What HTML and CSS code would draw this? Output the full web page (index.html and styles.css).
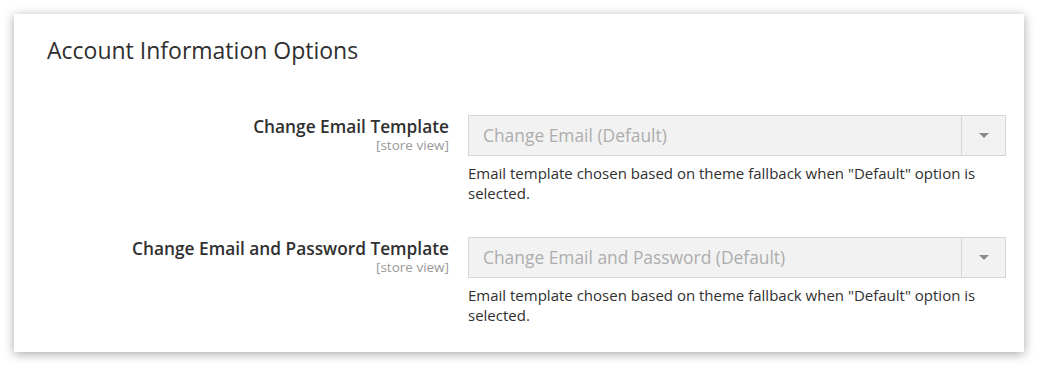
FILE: index.html
```html
<!DOCTYPE html>
<html lang="en">
<head>
    <meta charset="UTF-8">
    <title>Account Information Options</title>
    <link rel="stylesheet" href="styles.css">
</head>
<body>
    <div class="card">
        <h2 class="card-title">Account Information Options</h2>

        <div class="field">
            <div class="field-label">
                <span class="label-text">Change Email Template</span>
                <span class="scope">[store view]</span>
            </div>
            <div class="field-control">
                <div class="select">
                    <span class="select-value">Change Email (Default)</span>
                    <span class="select-arrow"></span>
                </div>
                <p class="note">Email template chosen based on theme fallback when "Default" option is selected.</p>
            </div>
        </div>

        <div class="field">
            <div class="field-label">
                <span class="label-text">Change Email and Password Template</span>
                <span class="scope">[store view]</span>
            </div>
            <div class="field-control">
                <div class="select">
                    <span class="select-value">Change Email and Password (Default)</span>
                    <span class="select-arrow"></span>
                </div>
                <p class="note">Email template chosen based on theme fallback when "Default" option is selected.</p>
            </div>
        </div>
    </div>
</body>
</html>
```

FILE: styles.css
```css
body {
    margin: 0;
    background: #fff;
    font-family: "Open Sans", "Liberation Sans", sans-serif;
    color: #303030;
}
.card {
    margin: 14px;
    width: 1010px;
    height: 338px;
    box-sizing: border-box;
    padding: 22px 18px 0 33px;
    background: #fff;
    box-shadow: 0 2px 10px rgba(0, 0, 0, 0.35);
}
.card-title {
    margin: 0 0 51px;
    font-size: 23px;
    font-weight: 400;
    line-height: 28px;
    color: #303030;
}
.field {
    display: grid;
    grid-template-columns: 1fr 538px;
    column-gap: 19px;
    margin-bottom: 34px;
}
.field-label {
    display: flex;
    flex-direction: column;
    align-items: flex-end;
    padding-top: 2px;
    text-align: right;
}
.label-text {
    font-size: 17.3px;
    font-weight: 600;
    line-height: 20px;
    color: #303030;
}
.scope {
    font-size: 13.5px;
    line-height: 17px;
    color: #999;
}
.select {
    display: flex;
    height: 41px;
    box-sizing: border-box;
    border: 1px solid #d6d6d6;
    background: #f2f2f2;
}
.select-value {
    flex: 1;
    padding-left: 14px;
    font-size: 17.4px;
    line-height: 39px;
    color: #adadad;
}
.select-arrow {
    position: relative;
    width: 43px;
    border-left: 1px solid #d6d6d6;
}
.select-arrow::after {
    content: "";
    position: absolute;
    left: 17px;
    top: 17px;
    border-left: 5px solid transparent;
    border-right: 5px solid transparent;
    border-top: 5px solid #8a8a8a;
}
.note {
    margin: 7px 0 0;
    font-size: 15px;
    line-height: 20px;
    color: #303030;
}
```
